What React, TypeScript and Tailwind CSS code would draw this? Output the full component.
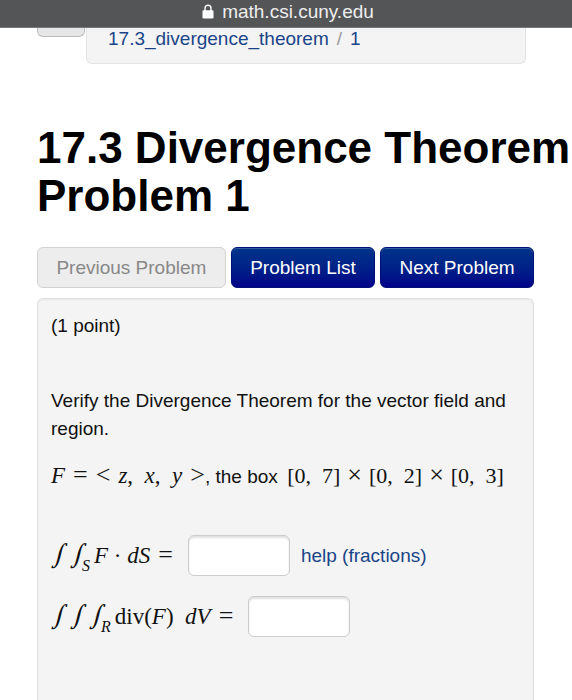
import type { ReactNode } from 'react';

const Var = ({ children }: { children: ReactNode }) => <i className="italic">{children}</i>;

const Op = ({ children }: { children: ReactNode }) => (
  <span className="mx-2 text-[26px] leading-none">{children}</span>
);

const Times = () => <span className="mx-[7px] text-[26px] leading-none">×</span>;

const Integral = ({ count, region }: { count: number; region: string }) => (
  <span className="flex items-center">
    {Array.from({ length: count }, (_, i) => (
      <span
        key={i}
        className='flex h-7 w-[19px] items-center font-["DejaVu_Math_TeX_Gyre","Liberation_Serif",serif] text-[23px] leading-none italic'
      >
        ∫
      </span>
    ))}
    <sub className="bottom-0 mt-5 mr-1 -ml-[7px] text-base leading-none italic">{region}</sub>
  </span>
);

const answerBox =
  'h-[41px] w-[102px] rounded-md border border-[#cccccc] bg-white px-2 font-["Liberation_Sans",sans-serif] text-[19px] shadow-[inset_0_2px_2px_rgba(0,0,0,0.12)]';

const navButton =
  'h-[41px] flex-auto rounded-md border border-[#00107a] bg-gradient-to-b from-[#003388] to-[#000088] px-[17px] text-[19px] text-white shadow-[inset_0_1px_0_rgba(255,255,255,0.2)]';

const App = () => {
  return (
    <div className='flex min-h-screen flex-col overflow-x-hidden bg-white font-["Liberation_Sans",Helvetica,sans-serif] text-[19px] leading-7 text-[#111111]'>
      {/* Browser address bar */}
      <header className="flex h-7 items-center justify-center gap-2 border-b border-[#777777] bg-[#545557] pb-1 pl-1 text-[19px] text-[#eeeeee]">
        <svg viewBox="0 0 12 15" className="h-[15px] w-3" aria-hidden="true">
          <path d="M3 7V4.2a3 3 0 0 1 6 0V7" fill="none" stroke="#fff" strokeWidth="1.4" />
          <rect x="0.5" y="6.3" width="11" height="8.3" rx="1.3" fill="#fff" />
        </svg>
        <span>math.csi.cuny.edu</span>
      </header>

      <div className="flex flex-1 flex-col pr-[38px] pl-[37px]">
        {/* Breadcrumb row, partly scrolled under the bar */}
        <div className="flex items-start">
          <button
            type="button"
            aria-label="Menu"
            className="h-[9px] w-12 rounded-b-md border border-t-0 border-[#bbbbbb] bg-[#e6e6e6]"
          />
          <nav className="mr-2 ml-px h-9 flex-1 rounded-b-md border border-t-0 border-[#e3e3e3] bg-[#f4f4f4] pl-[21px] leading-[22px]">
            <a href="#set" className="text-[#1a4488]">17.3_divergence_theorem</a>
            <span className="px-2 text-[#999999]">/</span>
            <a href="#problem" className="text-[#1a4488]">1</a>
          </nav>
        </div>

        <h1 className="mt-[60px] text-[44px] leading-[48px] font-bold whitespace-nowrap text-black">
          17.3 Divergence Theorem
          <br />
          Problem 1
        </h1>

        <div className="mt-[27px] flex gap-[5px]">
          <button
            type="button"
            disabled
            className="h-[41px] flex-auto rounded-md border border-[#d2d2d2] bg-[#ededed] px-[17px] text-[19px] text-[#888888]"
          >
            Previous Problem
          </button>
          <button type="button" className={navButton}>Problem List</button>
          <button type="button" className={navButton}>Next Problem</button>
        </div>

        <main className="mt-[10px] flex-1 rounded-t-md border border-b-0 border-[#e0e0e0] bg-[#f4f4f4] px-[13px] pt-[13px] shadow-[inset_0_1px_2px_rgba(0,0,0,0.06)]">
          <p>(1 point)</p>
          <p className="mt-[47px]">Verify the Divergence Theorem for the vector field and region.</p>

          <p className="mt-[19px] flex items-baseline whitespace-pre">
            <span className='font-["Liberation_Serif",serif] text-[23px]'>
              <Var>F</Var><Op>=</Op><span className="mr-2 text-[26px] leading-none">&lt;</span>
              <Var>z</Var>,  <Var>x</Var>,  <Var>y</Var>
              <span className="ml-2 text-[26px] leading-none">&gt;</span>
            </span>
            , the box{' '}
            <span className='ml-1 font-["Liberation_Serif",serif] text-[22px]'>
              [0,  7]<Times />[0,  2]<Times />[0,  3]
            </span>
          </p>

          <div className='mt-11 flex items-center font-["Liberation_Serif",serif] text-[23px]'>
            <label htmlFor="flux" className="flex items-center whitespace-pre">
              <Integral count={2} region="S" />
              <span><Var>F</Var> · <Var>dS</Var><Op>=</Op></span>
            </label>
            <input id="flux" type="text" className={`ml-[7px] ${answerBox}`} />
            <a
              href="#help"
              className='ml-[11px] font-["Liberation_Sans",sans-serif] text-[19px] text-[#1a4488]'
            >
              help (fractions)
            </a>
          </div>

          <div className='mt-5 flex items-center font-["Liberation_Serif",serif] text-[23px]'>
            <label htmlFor="volume" className="flex items-center whitespace-pre">
              <Integral count={3} region="R" />
              <span>div(<Var>F</Var>)  <Var>dV</Var><Op>=</Op></span>
            </label>
            <input id="volume" type="text" className={`ml-[7px] ${answerBox}`} />
          </div>
        </main>
      </div>
    </div>
  );
};

export default App;
